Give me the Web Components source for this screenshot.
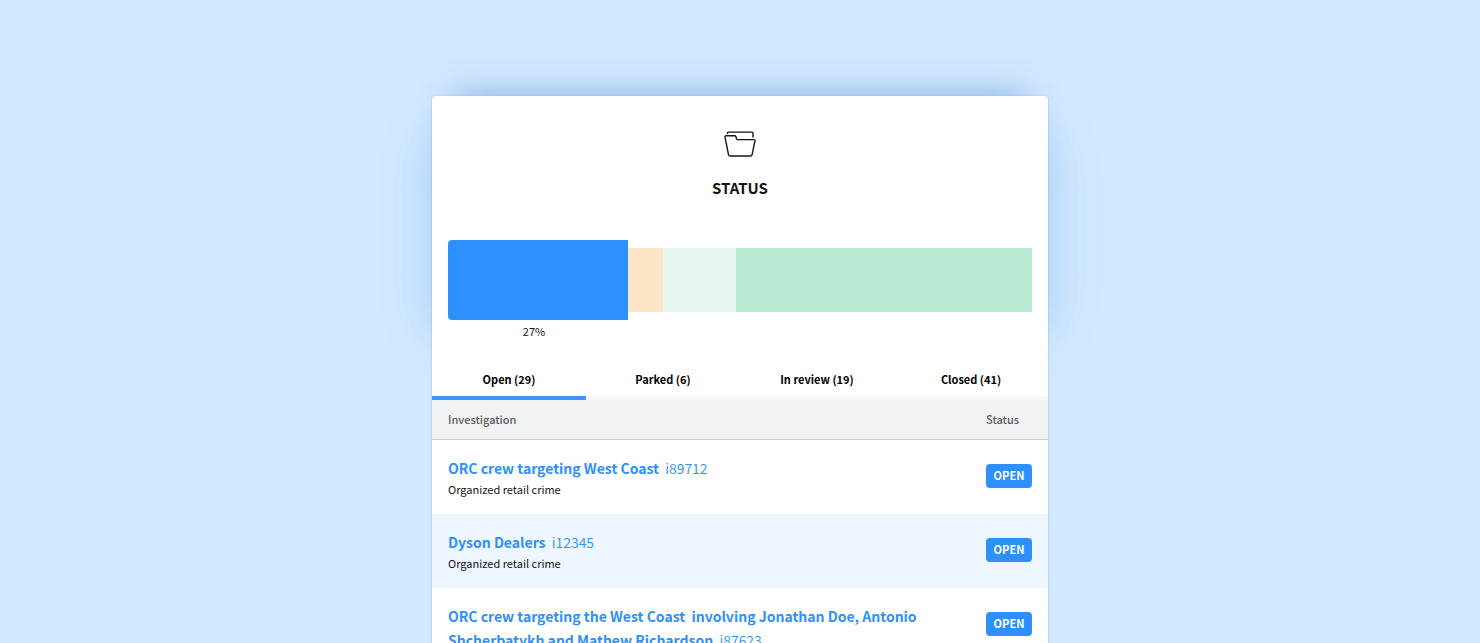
<!DOCTYPE html>
<html lang="en">
<head>
<meta charset="utf-8">
<meta name="viewport" content="width=device-width, initial-scale=1">
<title>Investigation status</title>
<style>
    html {
        background: #d1e8ff;
    }

    body {
        margin: 0;
        padding: 96px 16px 0;
        font-family: "Noto Sans CJK SC", "Noto Sans", sans-serif;
        color: #141414;
    }
</style>
</head>
<body>

<status-card>
    <folder-icon slot="icon"></folder-icon>
    <span slot="title">STATUS</span>
    <status-chart></status-chart>
    <status-tabs></status-tabs>
    <investigation-table></investigation-table>
</status-card>

<script>
const groups = [
    { name: 'Open', count: 29, share: 180, color: '#2e90fd', label: '27%' },
    { name: 'Parked', count: 6, share: 35, color: '#fde6c5' },
    { name: 'In review', count: 19, share: 73, color: '#e7f6ef' },
    { name: 'Closed', count: 41, share: 296, color: '#b8ead4' }
];

const investigations = [
    { title: 'ORC crew targeting West Coast', id: 'i89712', type: 'Organized retail crime' },
    { title: 'Dyson Dealers', id: 'i12345', type: 'Organized retail crime' },
    { title: 'ORC crew targeting the West Coast&nbsp; involving Jonathan Doe, Antonio Shcherbatykh and Mathew Richardson', id: 'i87623' }
];

class FolderIcon extends HTMLElement {
    constructor() {
        super();
        this.attachShadow({ mode: 'open' }).innerHTML = `
            <style>
                :host {
                    display: block;
                    width: 32px;
                    height: 32px;
                }

                svg {
                    display: block;
                }
            </style>
            <svg width="32" height="32" viewBox="0 0 32 32" fill="none" stroke="#141414" stroke-width="1.4" stroke-linecap="round" stroke-linejoin="round" aria-hidden="true">
                <path d="M3.500 5.400V5.200q0-1.100 1.100-1.100H27.900q1.100 0 1.100 1.100V9"/>
                <path d="M2 7.800H10.700Q11.600 7.800 11.900 8.600L12.500 10.700Q12.800 11.600 13.700 11.600H30Q31.200 11.600 31 12.700L28.100 26.700Q27.800 28 26.300 28H6.200Q4.800 28 4.500 26.600L1 9.100Q.8 7.800 2 7.800Z"/>
            </svg>
        `;
    }
}

class StatusCard extends HTMLElement {
    constructor() {
        super();
        this.attachShadow({ mode: 'open' }).innerHTML = `
            <style>
                :host {
                    display: block;
                    position: relative;
                    max-width: 616px;
                    margin: 0 auto;
                }

                /* Soft glow behind the top part of the card */
                .glow {
                    position: absolute;
                    inset: 32px 0 auto;
                    height: 208px;
                    border-radius: 32px;
                    box-shadow: 0 0 48px rgba(80, 160, 230, 0.35);
                }

                .glow::after {
                    content: "";
                    position: absolute;
                    inset: -32px 24px auto;
                    height: 80px;
                    box-shadow: 0 0 32px rgba(70, 120, 200, 0.5);
                }

                article {
                    position: relative;
                    background: #fff;
                    border-radius: 4px;
                    box-shadow: 0 1px 2px rgba(50, 90, 140, 0.4);
                    overflow: hidden;
                }

                header {
                    display: flex;
                    flex-direction: column;
                    align-items: center;
                    gap: 16px;
                    padding: 32px 16px 40px;
                }

                h1 {
                    margin: 0;
                    font-size: 15px;
                    line-height: 24px;
                    font-weight: 700;
                }
            </style>
            <div class="glow"></div>
            <article>
                <header>
                    <slot name="icon"></slot>
                    <h1><slot name="title"></slot></h1>
                </header>
                <slot></slot>
            </article>
        `;
    }
}

class StatusChart extends HTMLElement {
    constructor() {
        super();
        const bars = groups.map((group, i) => `
            <li class="${i === 0 ? 'active' : ''}" style="flex-grow: ${group.share}">
                <div class="bar" style="background: ${group.color}"></div>
                ${group.label ? `<span>${group.label}</span>` : ''}
            </li>
        `).join('');

        this.attachShadow({ mode: 'open' }).innerHTML = `
            <style>
                :host {
                    display: block;
                    padding: 0 16px 18px;
                }

                ul {
                    display: flex;
                    margin: 0;
                    padding: 0;
                    list-style: none;
                }

                li {
                    flex: 1 1 0;
                    min-width: 0;
                    padding-top: 8px;
                }

                .bar {
                    height: 64px;
                }

                .active {
                    padding-top: 0;
                }

                .active .bar {
                    height: 80px;
                    border-radius: 4px 0 0 4px;
                }

                span {
                    display: block;
                    padding: 0 8px 0 0;
                    font-size: 11px;
                    line-height: 22px;
                    text-align: center;
                }
            </style>
            <ul>${bars}</ul>
        `;
    }
}

class StatusTabs extends HTMLElement {
    constructor() {
        super();
        const tabs = groups.map((group, i) => `
            <button type="button" role="tab" aria-selected="${i === 0}">${group.name} (${group.count})</button>
        `).join('');

        this.attachShadow({ mode: 'open' }).innerHTML = `
            <style>
                :host {
                    display: block;
                }

                div {
                    display: grid;
                    grid-template-columns: repeat(4, 1fr);
                }

                button {
                    padding: 8px 0 6px;
                    border: 0;
                    border-bottom: 4px solid #f7f7f7;
                    background: none;
                    color: #000;
                    font: inherit;
                    font-size: 11px;
                    line-height: 22px;
                    font-weight: 700;
                    cursor: pointer;
                }

                button[aria-selected="true"] {
                    border-color: #4292fd;
                }
            </style>
            <div role="tablist">${tabs}</div>
        `;

        this.shadowRoot.addEventListener('click', (event) => {
            const selected = event.target.closest('button');
            if (!selected) return;
            this.shadowRoot.querySelectorAll('button').forEach((tab) => {
                tab.setAttribute('aria-selected', tab === selected);
            });
        });
    }
}

class StatusBadge extends HTMLElement {
    constructor() {
        super();
        this.attachShadow({ mode: 'open' }).innerHTML = `
            <style>
                :host {
                    display: block;
                    padding-bottom: 2px;
                    border-radius: 4px;
                    background: #2e90fd;
                    color: #fff;
                    font-size: 11px;
                    line-height: 22px;
                    font-weight: 700;
                    text-align: center;
                }
            </style>
            <slot></slot>
        `;
    }
}

class InvestigationTable extends HTMLElement {
    constructor() {
        super();
        const rows = investigations.map((item) => `
            <tr>
                <td>
                    <a href="#${item.id}"><b>${item.title}</b>&nbsp; ${item.id}</a>
                    ${item.type ? `<p>${item.type}</p>` : ''}
                </td>
                <td class="status"><status-badge>OPEN</status-badge></td>
            </tr>
        `).join('');

        this.attachShadow({ mode: 'open' }).innerHTML = `
            <style>
                :host {
                    display: block;
                }

                table {
                    width: 100%;
                    border-collapse: collapse;
                    table-layout: fixed;
                }

                th {
                    padding: 8px 16px 9px;
                    border-bottom: 1px solid #c8cacd;
                    background: #f1f2f4;
                    color: #5c5c5c;
                    font-size: 11px;
                    line-height: 22px;
                    font-weight: 500;
                    text-align: left;
                }

                td {
                    padding: 16px;
                    vertical-align: top;
                }

                th:last-child,
                td:last-child {
                    box-sizing: border-box;
                    width: 78px;
                }

                .status {
                    padding-top: 24px;
                }

                tbody tr:nth-child(even) {
                    background: #eef7ff;
                }

                a {
                    display: block;
                    color: #2e90fd;
                    font-size: 14px;
                    line-height: 24px;
                    font-weight: 350;
                    text-decoration: none;
                }

                b {
                    font-weight: 700;
                }

                p {
                    margin: 0;
                    font-size: 11px;
                    line-height: 18px;
                }
            </style>
            <table>
                <thead>
                    <tr><th scope="col">Investigation</th><th scope="col">Status</th></tr>
                </thead>
                <tbody>${rows}</tbody>
            </table>
        `;
    }
}

customElements.define('folder-icon', FolderIcon);
customElements.define('status-card', StatusCard);
customElements.define('status-chart', StatusChart);
customElements.define('status-tabs', StatusTabs);
customElements.define('status-badge', StatusBadge);
customElements.define('investigation-table', InvestigationTable);
</script>
</body>
</html>
